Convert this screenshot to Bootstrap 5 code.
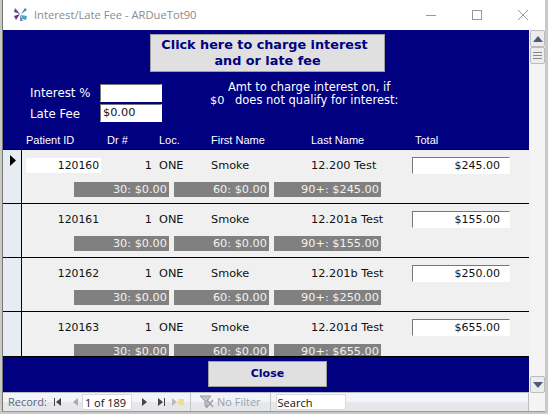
<!DOCTYPE html>
<html lang="en">
<head>
<meta charset="utf-8">
<title>Interest/Late Fee - ARDueTot90</title>
<link rel="stylesheet" href="https://cdn.jsdelivr.net/npm/bootstrap@5.3.0/dist/css/bootstrap.min.css">
<style>
html,body{height:414px;width:548px;overflow:hidden;margin:0}
body{background:#c9c9c6;font-family:"DejaVu Sans",sans-serif;font-size:11.3px;color:#111;padding:0 3px 2px 3px}
.acc-win{height:412px;background:#f4f4f4;border-left:1px solid #777;border-bottom:1px solid #999;margin-left:-1px}
.acc-title{height:30px;background:#fff;font-family:"Open Sans",sans-serif;font-size:11.2px;color:#8b8b8b;padding-left:10px}
.acc-title .ttl{margin-left:6px}
.acc-ctrls{gap:36px;padding-right:17px}
.acc-body{min-height:0}
.acc-main{width:526px;min-width:526px;min-height:0}
.acc-head{height:120px;background:#000080;color:#fff;border-bottom:1px solid #000}
.acc-big{width:235px;height:38px;margin:4px 0 0 147px;background:#e0e0e0;border:1px solid #a0a0a0;color:#000080;font-weight:700;font-size:12.8px;line-height:16px;text-align:center;padding-top:2px}
.acc-big .l1{display:inline-block;padding-right:6px}
.acc-params{margin:12px 0 0 27px;height:38px}
.acc-labels{width:70px;gap:7px;font-size:11.8px;line-height:14px;padding-top:2px}
.acc-inputs{width:62px;gap:2px}
.acc-in{height:18px;background:#fff;border:1px solid;border-color:#777 #fff #fff #777;color:#111;padding-left:2px;line-height:16px;font-size:11.3px}
.acc-zero{margin-left:48px;margin-top:10px;width:18px;font-size:11.3px;line-height:14px}
.acc-amt{width:180px;font-size:11.5px;line-height:13px;margin-top:-3px}
.acc-amt .l2{display:block;margin-left:7px}
.acc-cols,.acc-top{display:grid;grid-template-columns:75px 51px 59px 100px 101px 98px}
.acc-cols{margin:11px 0 0 18px;padding-left:5px;font-family:"Liberation Sans",sans-serif;font-size:11px;line-height:14px}
.acc-cols .c2{padding-left:6px}.acc-cols .c3{padding-left:7px}.acc-cols .c6{padding-left:3px}
.acc-list{min-height:0;overflow:hidden}
.acc-rec{height:54px;border-bottom:1px solid #000}
.acc-sel{width:19px;background:#e7ecf3;border-right:1px solid #000;padding:2px 0 0 7px}
.acc-recmain{background:#f0f0f0;padding:7px 0 0 4px}
.acc-top{height:18px;line-height:17px}
.acc-pid{height:15px;line-height:15px;margin-top:1px;text-align:right;padding-right:2px;font-size:10.8px}
.acc-pid.cur{background:#fff}
.acc-dr{text-align:right}.acc-loc{padding-left:7px}
.acc-tot{height:17px;background:#fff;border:1px solid;border-color:#777 #fff #fff #777;text-align:right;padding-right:9px;line-height:15px;font-size:11px}
.acc-bars{margin:7px 0 0 48px;gap:5px}
.acc-bar{height:15px;line-height:15px;background:#808080;color:#f2f2f2;text-align:right;padding-right:2px;width:95px}
.acc-bar.wide{width:107px}
.acc-foot{height:36px;background:#000080;border-top:1px solid #000}
.acc-close{width:119px;height:26px;background:#e0e0e0;border:1px solid #a0a0a0;color:#000080;font-weight:700;font-size:11px;line-height:24px;text-align:center;margin-left:205px;margin-top:4px}
.acc-scroll{width:16px;background:#f4f4f4;height:363px}
.acc-sb{width:15px;height:17px;background:#ececec;border:1px solid #bcbcbc;border-radius:2px;margin-left:1px}
.acc-nav{height:19px;width:526px;background:linear-gradient(#f3f4f7 50%,#e6e7ea 50%);border-top:1px solid #b8bcc4;border-right:1px solid #b8bcc4;font-family:"Open Sans",sans-serif;font-size:11px;color:#56657a;padding-left:5px}
.acc-navbox{background:#fff;border:1px solid #d8dce2;height:16px;line-height:15px;color:#111;padding-left:1px}
.acc-sep{width:1px;height:18px;background:#c4c8ce}
.acc-dim{color:#9aa0a8}
.nv-first{margin-left:7px}.nv-prev{margin-left:12px}.nv-box{margin-left:4px;width:50px;padding-left:2px}
.nv-next{margin-left:10px}.nv-last{margin-left:11px}.nv-new{margin-left:7px}
.nv-s1{margin-left:6px}.nv-filter{margin-left:8px}.nv-nf{margin-left:3px}.nv-s2{margin-left:9px}
.nv-search{margin-left:5px;width:70px}
</style>
</head>
<body>
<div class="acc-win d-flex flex-column">
  <div class="acc-title d-flex align-items-center justify-content-between flex-shrink-0">
    <div class="d-flex align-items-center">
      <svg width="15" height="15" viewBox="0 0 15 15"><path d="M7 7 2 1 1 5Z" fill="#6b4a8c"/><path d="M7 7 1 9 3 13Z" fill="#5c3d80"/><path d="M8 7 12 1 14 3Z" fill="#3a8fb5"/><path d="M8 8 14 9 13 13 9 12Z" fill="#4aa6c8"/><path d="M7 8 7 14 10 14Z" fill="#8a7aa8"/></svg>
      <span class="ttl">Interest/Late Fee - ARDueTot90</span>
    </div>
    <div class="acc-ctrls d-flex align-items-center">
      <svg width="10" height="10" viewBox="0 0 10 10"><path d="M0 5.5H10" stroke="#999" fill="none"/></svg>
      <svg width="10" height="10" viewBox="0 0 10 10"><rect x=".5" y=".5" width="9" height="9" stroke="#999" fill="none"/></svg>
      <svg width="10" height="10" viewBox="0 0 10 10"><path d="M0 0 10 10M10 0 0 10" stroke="#999" fill="none"/></svg>
    </div>
  </div>
  <div class="acc-body d-flex flex-grow-1">
    <div class="acc-main d-flex flex-column">
      <div class="acc-head flex-shrink-0">
        <div class="acc-big"><span class="l1">Click here to charge interest</span><br>and or late fee</div>
        <div class="acc-params d-flex">
          <div class="acc-labels d-flex flex-column"><span>Interest %</span><span>Late Fee</span></div>
          <div class="acc-inputs d-flex flex-column"><div class="acc-in"></div><div class="acc-in">$0.00</div></div>
          <div class="acc-zero">$0</div>
          <div class="acc-amt">Amt to charge interest on, if<span class="l2">does not qualify for interest:</span></div>
        </div>
        <div class="acc-cols"><span>Patient ID</span><span class="c2">Dr #</span><span class="c3">Loc.</span><span>First Name</span><span>Last Name</span><span class="c6">Total</span></div>
      </div>
      <div class="acc-list d-flex flex-column flex-grow-1">
        <div class="acc-rec d-flex flex-shrink-0">
          <div class="acc-sel flex-shrink-0"><svg width="6" height="11" viewBox="0 0 6 11"><path d="M0 0 6 5.5 0 11Z" fill="#000"/></svg></div>
          <div class="acc-recmain flex-grow-1">
            <div class="acc-top"><div class="acc-pid cur">120160</div><div class="acc-dr">1</div><div class="acc-loc">ONE</div><div>Smoke</div><div>12.200 Test</div><div class="acc-tot">$245.00</div></div>
            <div class="acc-bars d-flex"><div class="acc-bar">30: $0.00</div><div class="acc-bar">60: $0.00</div><div class="acc-bar wide">90+: $245.00</div></div>
          </div>
        </div>
        <div class="acc-rec d-flex flex-shrink-0">
          <div class="acc-sel flex-shrink-0"></div>
          <div class="acc-recmain flex-grow-1">
            <div class="acc-top"><div class="acc-pid">120161</div><div class="acc-dr">1</div><div class="acc-loc">ONE</div><div>Smoke</div><div>12.201a Test</div><div class="acc-tot">$155.00</div></div>
            <div class="acc-bars d-flex"><div class="acc-bar">30: $0.00</div><div class="acc-bar">60: $0.00</div><div class="acc-bar wide">90+: $155.00</div></div>
          </div>
        </div>
        <div class="acc-rec d-flex flex-shrink-0">
          <div class="acc-sel flex-shrink-0"></div>
          <div class="acc-recmain flex-grow-1">
            <div class="acc-top"><div class="acc-pid">120162</div><div class="acc-dr">1</div><div class="acc-loc">ONE</div><div>Smoke</div><div>12.201b Test</div><div class="acc-tot">$250.00</div></div>
            <div class="acc-bars d-flex"><div class="acc-bar">30: $0.00</div><div class="acc-bar">60: $0.00</div><div class="acc-bar wide">90+: $250.00</div></div>
          </div>
        </div>
        <div class="acc-rec d-flex flex-shrink-0">
          <div class="acc-sel flex-shrink-0"></div>
          <div class="acc-recmain flex-grow-1">
            <div class="acc-top"><div class="acc-pid">120163</div><div class="acc-dr">1</div><div class="acc-loc">ONE</div><div>Smoke</div><div>12.201d Test</div><div class="acc-tot">$655.00</div></div>
            <div class="acc-bars d-flex"><div class="acc-bar">30: $0.00</div><div class="acc-bar">60: $0.00</div><div class="acc-bar wide">90+: $655.00</div></div>
          </div>
        </div>
      </div>
      <div class="acc-foot flex-shrink-0"><div class="acc-close">Close</div></div>
    </div>
    <div class="acc-scroll d-flex flex-column justify-content-between">
      <div>
        <div class="acc-sb d-flex align-items-center justify-content-center"><svg width="10" height="6" viewBox="0 0 10 6"><path d="M5 0 10 6H0Z" fill="#4d5b78"/></svg></div>
        <div class="acc-sb d-flex align-items-center justify-content-center"><svg width="9" height="7" viewBox="0 0 9 7"><path d="M0 .5H9M0 3.5H9M0 6.5H9" stroke="#888" fill="none"/></svg></div>
      </div>
      <div class="acc-sb d-flex align-items-center justify-content-center"><svg width="10" height="6" viewBox="0 0 10 6"><path d="M0 0H10L5 6Z" fill="#4d5b78"/></svg></div>
    </div>
  </div>
  <div class="acc-nav d-flex align-items-center flex-shrink-0">
    <span>Record:</span>
    <svg class="nv-first" width="7" height="8" viewBox="0 0 7 8"><path d="M.5 0V8" stroke="#444"/><path d="M7 0V8L2 4Z" fill="#444"/></svg>
    <svg class="nv-prev" width="5" height="8" viewBox="0 0 5 8"><path d="M5 0V8L0 4Z" fill="#aaa"/></svg>
    <div class="acc-navbox nv-box flex-shrink-0">1 of 189</div>
    <svg class="nv-next" width="5" height="8" viewBox="0 0 5 8"><path d="M0 0V8L5 4Z" fill="#444"/></svg>
    <svg class="nv-last" width="7" height="8" viewBox="0 0 7 8"><path d="M6.5 0V8" stroke="#444"/><path d="M0 0V8L5 4Z" fill="#444"/></svg>
    <svg class="nv-new" width="12" height="8" viewBox="0 0 12 8"><path d="M0 0V8L5 4Z" fill="#bbb"/><path d="M6 1H12V7H6Z" fill="#eedd99"/></svg>
    <div class="acc-sep nv-s1 flex-shrink-0"></div>
    <svg class="nv-filter" width="15" height="14" viewBox="0 0 15 14"><path d="M1 1H12L8 6V13L6 11V6Z" fill="#c4c6ca" stroke="#9a9ca0"/><path d="M8 5 14 12M14 5 8 12" stroke="#9a9ca0" stroke-width="1.4"/></svg>
    <span class="acc-dim nv-nf">No Filter</span>
    <div class="acc-sep nv-s2 flex-shrink-0"></div>
    <div class="acc-navbox nv-search flex-shrink-0">Search</div>
  </div>
</div>
<script src="https://cdn.jsdelivr.net/npm/bootstrap@5.3.0/dist/js/bootstrap.bundle.min.js"></script>
</body>
</html>
